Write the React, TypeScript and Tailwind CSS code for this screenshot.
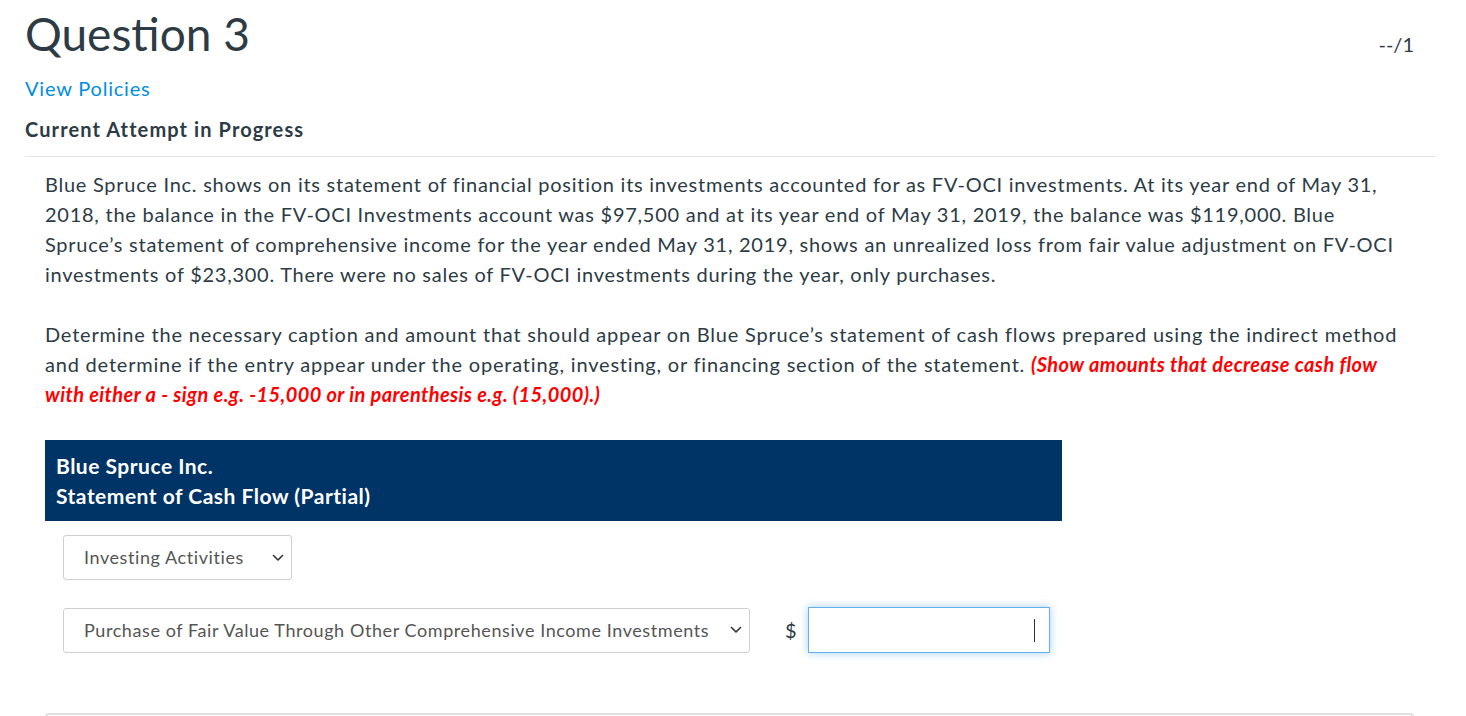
const font = { fontFamily: "Lato, 'Open Sans', sans-serif" };

const Chevron = () => (
  <svg width="12" height="8" viewBox="0 0 12 8" fill="none" className="shrink-0">
    <path d="M1.5 1.5 L6 6 L10.5 1.5" stroke="#333" strokeWidth="1.6" strokeLinecap="round" strokeLinejoin="round" />
  </svg>
)

interface SelectBoxProps {
  label: string;
  width: string;
}

const SelectBox = ({ label, width }: SelectBoxProps) => (
  <div className={`${width} h-[45px] flex items-center justify-between pl-[20px] pr-[7px] border border-[#cfcfcf] rounded-[3px] bg-white text-[18px] tracking-[0.58px] text-[#555]`}>
    <span>{label}</span>
    <Chevron />
  </div>
)

const App = () => {
  return (
    <div className="min-h-screen bg-white text-[#2d3b45] overflow-hidden" style={font}>
      <div className="pl-[25px] pr-[30px]">
        <div className="flex justify-between items-start pt-[5px]">
          <h1 className="text-[46px] leading-[58px] font-normal">Question 3</h1>
          <span className="text-[20px] mt-[24px] mr-[22px]">--/1</span>
        </div>
        <div className="mt-[10px] text-[20px] leading-[30px] tracking-[0.8px] text-[#008ee2]">View Policies</div>
        <div className="mt-[11px] text-[20px] leading-[30px] tracking-[1.1px] font-bold">Current Attempt in Progress</div>
        <div className="mt-[12px] border-t border-[#e6e6e6]" />

        <div className="pl-[20px] pr-[22px] pt-[12px]">
          <p className="text-[20px] leading-[30px] tracking-[0.74px]">
            Blue Spruce Inc. shows on its statement of financial position its investments accounted for as FV-OCI investments. At its year end of May 31, 2018, the balance in the FV-OCI Investments account was $97,500 and at its year end of May 31, 2019, the balance was $119,000. Blue Spruce’s statement of comprehensive income for the year ended May 31, 2019, shows an unrealized loss from fair value adjustment on FV-OCI investments of $23,300. There were no sales of FV-OCI investments during the year, only purchases.
          </p>
          <p className="mt-[30px] text-[20px] leading-[30px] tracking-[0.8px]">
            Determine the necessary caption and amount that should appear on Blue Spruce’s statement of cash flows prepared using the indirect method and determine if the entry appear under the operating, investing, or financing section of the statement.{" "}
            <span className="font-bold italic text-[#ff0000] tracking-[0.4px]">
              (Show amounts that decrease cash flow
              <br />
              with either a - sign e.g. -15,000 or in parenthesis e.g. (15,000).)
            </span>
          </p>

          <div className="mt-[31px] w-[1017px] bg-[#003366] text-white font-bold text-[21px] leading-[30px] tracking-[0.5px] pl-[11px] pt-[11px] pb-[10px]">
            <div>Blue Spruce Inc.</div>
            <div>Statement of Cash Flow (Partial)</div>
          </div>

          <div className="pl-[18px]">
            <div className="mt-[14px]">
              <SelectBox label="Investing Activities" width="w-[229px]" />
            </div>
            <div className="mt-[27px] flex items-center">
              <SelectBox label="Purchase of Fair Value Through Other Comprehensive Income Investments" width="w-[687px]" />
              <span className="ml-[35px] text-[20px]">$</span>
              <div className="ml-[11px] w-[242px] h-[46px] flex items-center justify-end pr-[14px] border border-[#66afe9] bg-white shadow-[0_0_8px_rgba(102,175,233,0.6)]">
                <div className="w-px h-[23px] bg-[#333]" />
              </div>
            </div>
          </div>

          <div className="mt-[60px] h-[20px] border-t-2 border-x-2 border-[#e0e0e0] rounded-t-[4px]" />
        </div>
      </div>
    </div>
  )
}

export default App
